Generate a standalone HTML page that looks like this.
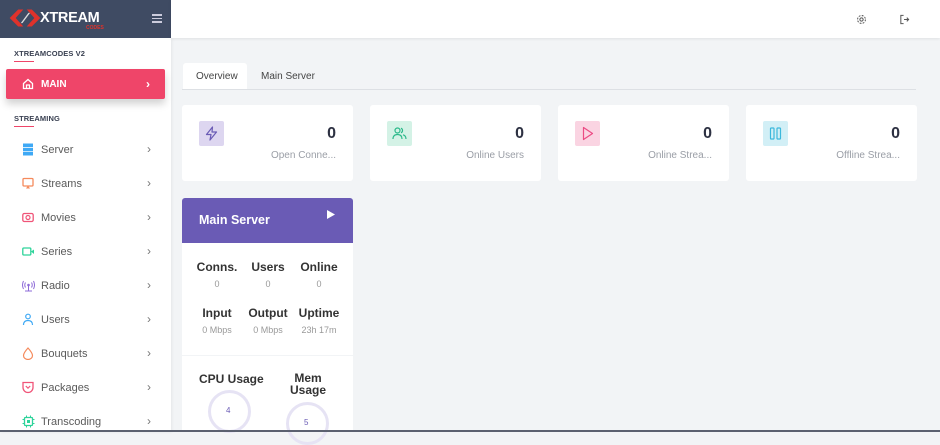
<!DOCTYPE html>
<html><head><meta charset="utf-8"><style>
*{margin:0;padding:0;box-sizing:border-box}
body{width:940px;height:432px;overflow:hidden;background:#f2f4f6;font-family:"Liberation Sans",Arial,sans-serif;position:relative}
.sb{position:absolute;left:0;top:0;width:171px;height:432px;background:#fff;box-shadow:1px 0 3px rgba(0,0,0,.06)}
.logo{height:38px;background:#3f4b63;position:relative}
.hdr{position:absolute;left:171px;top:0;right:0;height:38px;background:#fff;box-shadow:0 1px 3px rgba(0,0,0,.08)}
.sec{position:absolute;left:14px;font-size:7.5px;font-weight:bold;color:#3a4152;letter-spacing:.1px}
.sec:after{content:"";position:absolute;left:0;top:12px;width:20px;height:1px;background:#ef4569}
.main{position:absolute;left:6px;top:69px;width:159px;height:30px;background:#ef4569;border-radius:2px;box-shadow:0 5px 8px rgba(0,0,0,.18);color:#fff;font-size:10px;font-weight:bold}
.it{position:absolute;left:0;width:171px;height:20px;font-size:11px;color:#5a5a5a}
.it span{position:absolute;left:41px;top:4px}
.it svg{position:absolute;left:22px;top:3px}
.it i{position:absolute;left:147px;top:2px;font-style:normal;color:#777;font-size:12px}
.tab{position:absolute;top:63px;height:27px;font-size:10px;color:#444;line-height:27px;padding:0 13px}
.card{position:absolute;top:105px;width:171px;height:76px;background:#fff;border-radius:3px}
.ib{position:absolute;left:17px;top:16px;width:25px;height:25px;border-radius:2px}
.ib svg{position:absolute;left:5px;top:5px}
.num{position:absolute;right:17px;top:20px;font-size:16px;font-weight:bold;color:#2d3142}
.lbl{position:absolute;right:17px;top:45px;font-size:10px;color:#9a9ea6}
.g{position:absolute;text-align:center;width:50px}
.g b{display:block;font-size:12px;color:#333}
.g span{display:block;font-size:9px;color:#999;margin-top:5px}
</style></head><body>
<div class="sb">
 <div class="logo">
  <svg width="34" height="22" style="position:absolute;left:8px;top:7px" viewBox="0 0 40 24"><path d="M2 12 L12 2 L18 2 L9 12 L18 22 L12 22Z" fill="#e0322b"/><path d="M38 12 L28 2 L22 2 L31 12 L22 22 L28 22Z" fill="#e0322b"/><path d="M15 18 L24 6 L26 6 L17 18Z" fill="#ddd"/></svg>
  <div style="position:absolute;left:40px;top:10px;color:#fff;font-weight:bold;font-size:14.5px;letter-spacing:-.3px">XTREAM</div>
  <div style="position:absolute;left:86px;top:25px;color:#e0322b;font-size:5px;font-weight:bold">CODES</div>
  <div style="position:absolute;left:152px;top:14px;width:10px"><div style="height:1.5px;background:#ccd;margin-bottom:2px"></div><div style="height:1.5px;background:#ccd;margin-bottom:2px"></div><div style="height:1.5px;background:#ccd"></div></div>
 </div>
 <div class="sec" style="top:49px">XTREAMCODES V2</div>
 <div class="main">
  <svg width="12" height="12" viewBox="0 0 12 12" style="position:absolute;left:16px;top:9px"><path d="M1.5 5.5 L6 1.5 L10.5 5.5 V10.5 H1.5Z M4.5 10.5 V7 H7.5 V10.5" fill="none" stroke="#fff" stroke-width="1.3"/></svg>
  <span style="position:absolute;left:35px;top:10px">MAIN</span><span style="position:absolute;left:140px;top:8px;font-size:12px">›</span>
 </div>
 <div class="sec" style="top:114px">STREAMING</div>
 <div class="it" style="top:140px"><svg width="12" height="13" viewBox="0 0 12 13"><rect x="1" y="0.5" width="10" height="3.5" fill="#3fa9f5"/><rect x="1" y="4.8" width="10" height="3.5" fill="#3fa9f5"/><rect x="1" y="9" width="10" height="3.5" fill="#3fa9f5"/></svg><span>Server</span><i>›</i></div>
 <div class="it" style="top:174px"><svg width="12" height="13" viewBox="0 0 12 13"><rect x="1" y="1.5" width="10" height="7.5" rx="1" fill="none" stroke="#f58a5c" stroke-width="1.3"/><path d="M4 11.5 L6 8.5 L8 11.5Z" fill="#f58a5c"/></svg><span>Streams</span><i>›</i></div>
 <div class="it" style="top:208px"><svg width="12" height="13" viewBox="0 0 12 13"><rect x="0.8" y="2.5" width="10.4" height="8" rx="1.5" fill="none" stroke="#f05478" stroke-width="1.3"/><circle cx="6" cy="6.5" r="2" fill="none" stroke="#f05478" stroke-width="1.2"/></svg><span>Movies</span><i>›</i></div>
 <div class="it" style="top:242px"><svg width="13" height="13" viewBox="0 0 13 13"><rect x="0.8" y="3" width="8" height="7" rx="1" fill="none" stroke="#2dd39a" stroke-width="1.3"/><path d="M9 6.5 L12 4.5 V9Z" fill="#2dd39a"/></svg><span>Series</span><i>›</i></div>
 <div class="it" style="top:276px"><svg width="13" height="13" viewBox="0 0 13 13"><circle cx="6.5" cy="6" r="1.3" fill="#8e6bd8"/><path d="M3.5 3.5 Q2 6 3.5 8.5 M9.5 3.5 Q11 6 9.5 8.5 M1.5 2 Q-.5 6 1.5 10 M11.5 2 Q13.5 6 11.5 10 M6.5 7 V12 M3 12 H10" fill="none" stroke="#8e6bd8" stroke-width="1"/></svg><span>Radio</span><i>›</i></div>
 <div class="it" style="top:310px"><svg width="12" height="13" viewBox="0 0 12 13"><circle cx="6" cy="3.5" r="2.3" fill="none" stroke="#3fa9f5" stroke-width="1.2"/><path d="M1.5 12 Q1.5 7.5 6 7.5 Q10.5 7.5 10.5 12" fill="none" stroke="#3fa9f5" stroke-width="1.2"/></svg><span>Users</span><i>›</i></div>
 <div class="it" style="top:344px"><svg width="12" height="13" viewBox="0 0 12 13"><path d="M6 1 Q10.5 6 10.5 8.5 A4.5 4 0 0 1 1.5 8.5 Q1.5 6 6 1Z" fill="none" stroke="#f58a5c" stroke-width="1.2"/></svg><span>Bouquets</span><i>›</i></div>
 <div class="it" style="top:378px"><svg width="12" height="13" viewBox="0 0 12 13"><path d="M1 1.5 H11 V6.5 A5 5 0 0 1 1 6.5Z" fill="none" stroke="#f05478" stroke-width="1.3"/><path d="M3.8 5 L6 7.2 L8.2 5" fill="none" stroke="#f05478" stroke-width="1.2"/></svg><span>Packages</span><i>›</i></div>
 <div class="it" style="top:412px"><svg width="13" height="13" viewBox="0 0 13 13"><rect x="2.5" y="2.5" width="8" height="8" rx="1" fill="none" stroke="#2dd39a" stroke-width="1.3"/><rect x="5" y="5" width="3" height="3" fill="#2dd39a"/><path d="M4.5 0.5V2.5M8.5 0.5V2.5M4.5 10.5V12.5M8.5 10.5V12.5M0.5 4.5H2.5M0.5 8.5H2.5M10.5 4.5H12.5M10.5 8.5H12.5" stroke="#2dd39a" stroke-width="1"/></svg><span>Transcoding</span><i>›</i></div>
</div>
<div class="hdr">
 <svg width="11" height="11" viewBox="0 0 12 12" style="position:absolute;left:685px;top:14px"><circle cx="6" cy="6" r="1.8" fill="none" stroke="#555" stroke-width="1.1"/><circle cx="6" cy="6" r="4.3" fill="none" stroke="#555" stroke-width="1.1" stroke-dasharray="2 1.4"/></svg>
 <svg width="11" height="11" viewBox="0 0 12 12" style="position:absolute;left:728px;top:14px"><path d="M5 1.5 H2 V10.5 H5 M5.5 6 H10.5 M8.5 4 L10.5 6 L8.5 8" fill="none" stroke="#555" stroke-width="1.1"/></svg>
</div>
<div class="tab" style="left:183px;background:#fff;width:64px;border-radius:3px 3px 0 0">Overview</div>
<div class="tab" style="left:248px">Main Server</div>
<div style="position:absolute;left:182px;top:89px;width:734px;height:1px;background:#dde0e4"></div>

<div class="card" style="left:182px"><div class="ib" style="background:#ddd6f0"><svg width="15" height="15" viewBox="0 0 15 15"><path d="M8.5 1 L2.5 8.5 H7 L6 14 L12.5 6 H8Z" fill="none" stroke="#6a5bb5" stroke-width="1.2" stroke-linejoin="round"/></svg></div><div class="num">0</div><div class="lbl">Open Conne...</div></div>
<div class="card" style="left:370px"><div class="ib" style="background:#d4f2e6"><svg width="15" height="15" viewBox="0 0 15 15"><circle cx="5.5" cy="4.5" r="2.5" fill="none" stroke="#2bb98a" stroke-width="1.2"/><path d="M1 13 Q1 8.5 5.5 8.5 Q10 8.5 10 13 M9 2.2 A2.5 2.5 0 0 1 9 6.8 M11 8.8 Q14 9.5 14 13" fill="none" stroke="#2bb98a" stroke-width="1.2"/></svg></div><div class="num">0</div><div class="lbl">Online Users</div></div>
<div class="card" style="left:558px"><div class="ib" style="background:#fad4e2"><svg width="15" height="15" viewBox="0 0 15 15"><path d="M3.5 1.5 L12.5 7.5 L3.5 13.5Z" fill="none" stroke="#ec4b84" stroke-width="1.2" stroke-linejoin="round"/></svg></div><div class="num">0</div><div class="lbl">Online Strea...</div></div>
<div class="card" style="left:746px"><div class="ib" style="background:#d2eff6"><svg width="15" height="15" viewBox="0 0 15 15"><rect x="2.5" y="2" width="3.5" height="11" rx=".8" fill="none" stroke="#3cb8dc" stroke-width="1.2"/><rect x="9" y="2" width="3.5" height="11" rx=".8" fill="none" stroke="#3cb8dc" stroke-width="1.2"/></svg></div><div class="num">0</div><div class="lbl">Offline Strea...</div></div>

<div style="position:absolute;left:182px;top:198px;width:171px;height:45px;background:#6a5bb5;border-radius:3px 3px 0 0">
 <div style="position:absolute;left:17px;top:15px;color:#fff;font-weight:bold;font-size:12.5px">Main Server</div>
 <svg width="8" height="9" viewBox="0 0 8 9" style="position:absolute;left:145px;top:12px"><path d="M0 0 L8 4.5 L0 9Z" fill="#fff"/></svg>
</div>
<div style="position:absolute;left:182px;top:243px;width:171px;height:112px;background:#fff"></div>
<div class="g" style="left:192px;top:260px"><b>Conns.</b><span>0</span></div>
<div class="g" style="left:243px;top:260px"><b>Users</b><span>0</span></div>
<div class="g" style="left:294px;top:260px"><b>Online</b><span>0</span></div>
<div class="g" style="left:192px;top:306px"><b>Input</b><span>0 Mbps</span></div>
<div class="g" style="left:243px;top:306px"><b>Output</b><span>0 Mbps</span></div>
<div class="g" style="left:294px;top:306px"><b>Uptime</b><span>23h 17m</span></div>
<div style="position:absolute;left:182px;top:356px;width:171px;height:76px;background:#fff"></div>
<div style="position:absolute;left:199px;top:372px;font-size:12px;font-weight:bold;color:#333">CPU Usage</div>
<div style="position:absolute;left:286px;top:372px;width:44px;text-align:center;font-size:12px;font-weight:bold;color:#333;line-height:12px">Mem Usage</div>
<div style="position:absolute;left:208px;top:390px;width:43px;height:43px;border:3px solid #e6e3f4;border-radius:50%"></div>
<div style="position:absolute;left:226px;top:406px;font-size:8px;color:#6a5bb5">4</div>
<div style="position:absolute;left:286px;top:402px;width:43px;height:43px;border:3px solid #e6e3f4;border-radius:50%"></div>
<div style="position:absolute;left:304px;top:418px;font-size:8px;color:#6a5bb5">5</div>
<div style="position:absolute;left:0;top:430px;width:940px;height:2px;background:#5b6170"></div>
</body></html>
